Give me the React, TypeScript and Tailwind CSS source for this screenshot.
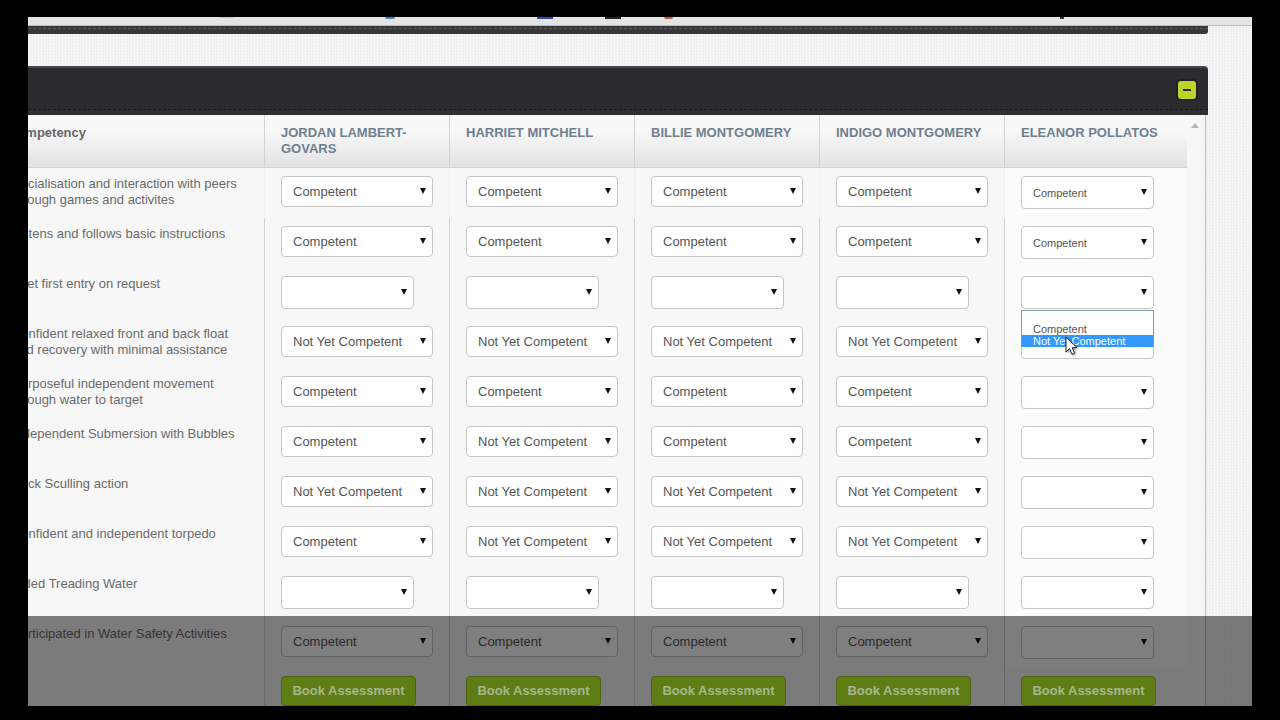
const C = "Competent";
const N = "Not Yet Competent";
const E = "";

const students = ["JORDAN LAMBERT-GOVARS", "HARRIET MITCHELL", "BILLIE MONTGOMERY", "INDIGO MONTGOMERY", "ELEANOR POLLATOS"];

const rows: { lines: string[]; values: string[] }[] = [
  { lines: ["Socialisation and interaction with peers", "through games and activites"], values: [C, C, C, C, C] },
  { lines: ["Listens and follows basic instructions"], values: [C, C, C, C, C] },
  { lines: ["Feet first entry on request"], values: [E, E, E, E, E] },
  { lines: ["Confident relaxed front and back float", "and recovery with minimal assistance"], values: [N, N, N, N, E] },
  { lines: ["Purposeful independent movement", "through water to target"], values: [C, C, C, C, E] },
  { lines: ["Independent Submersion with Bubbles"], values: [C, N, C, C, E] },
  { lines: ["Back Sculling action"], values: [N, N, N, N, E] },
  { lines: ["Confident and independent torpedo"], values: [C, N, N, N, E] },
  { lines: ["Aided Treading Water"], values: [E, E, E, E, E] },
  { lines: ["Participated in Water Safety Activities"], values: [C, C, C, C, E] },
];

function Arrow() {
  return (
    <svg width="6" height="6" viewBox="0 0 6 6" className="absolute right-[7px] top-1/2 -translate-y-1/2 -mt-[1px] pointer-events-none">
      <path d="M0 0h6L3 6z" fill="#111" />
    </svg>
  );
}

function Select({ value, small }: { value: string; small: boolean }) {
  const wide = value !== "" && !small;
  return (
    <div className={`relative ${wide ? "w-[152px] h-[31px]" : "w-[133px] h-[33px]"}`}>
      <select
        defaultValue={value}
        className={`appearance-none w-full h-full bg-white border border-[#c6c6c6] rounded-[4px] pl-[11px] outline-none text-[#555] ${small ? "text-[11px] pt-[2px]" : "text-[13px]"}`}
      >
        <option value=""></option>
        <option value={C}>{C}</option>
        <option value={N}>{N}</option>
      </select>
      <Arrow />
    </div>
  );
}

function OpenList() {
  return (
    <div className="absolute left-0 top-[34px] w-[133px] h-[37px] z-[5] bg-white border-x border-t border-[#8297ad] pt-[12px] text-[11px] leading-[12px] text-[#555]">
      <div className="pl-[11px] h-[12px]">{C}</div>
      <div className="pl-[11px] h-[12px] bg-[#3399ff] text-white">{N}</div>
    </div>
  );
}

function Cursor() {
  return (
    <svg width="14" height="20" viewBox="0 0 14 20" className="absolute left-[60px] top-[68px] z-[6] drop-shadow-[1px_1px_1px_rgba(0,0,0,0.4)]">
      <path d="M1 1v15l3.6-3.3 2.4 5.6 2.6-1.1-2.4-5.5H12z" fill="#fff" stroke="#222" strokeWidth="1" strokeLinejoin="round" />
    </svg>
  );
}

export default function App() {
  return (
    <div className="w-[1280px] h-[720px] bg-black overflow-hidden pt-[17px] px-[28px] font-['Liberation_Sans',Arial,sans-serif]">
      <div className="relative h-[689px] overflow-hidden flex flex-col bg-[#f2f2f2] bg-[conic-gradient(#f6f6f6_25%,#ededed_0_50%,#f6f6f6_0_75%,#ededed_0)] bg-[length:3px_3px]">
        {/* browser strip */}
        <div className="h-[9px] shrink-0 bg-[#e4e4e4] border-b border-[#bdbdbd] flex items-start">
          <span className="ml-[192px] w-[14px] h-[1px] bg-[#c9c9c9]" />
          <span className="ml-[151px] w-[10px] h-[2px] rounded-b-full bg-[#3f86c8]" />
          <span className="ml-[142px] w-[16px] h-[2px] bg-[#2a4aa8]" />
          <span className="ml-[52px] w-[16px] h-[2px] bg-[#222]" />
          <span className="ml-[43px] w-[9px] h-[2px] rounded-b-full bg-[#c2603a]" />
          <span className="ml-[387px] w-[4px] h-[2px] bg-[#333]" />
        </div>
        <div className="h-[8px] shrink-0 mr-[44px] bg-[#38383a] rounded-br-[3px] pt-[2px]">
          <div className="border-t border-dashed border-[#5c5c5c]" />
        </div>

        {/* panel header */}
        <div className="mt-[32px] h-[49px] shrink-0 mr-[44px] rounded-tr-[4px] rounded-br-[4px] border-t-2 border-[#47474a] bg-[#2c2c30] flex flex-col">
          <div className="flex-1 flex items-center justify-end pr-[12px] pt-[3px]">
            <div className="w-[18px] h-[18px] rounded-[3px] bg-[#bcd42c] ring-2 ring-[#222225] flex items-center justify-center">
              <div className="w-[8px] h-[2px] bg-[#2c2c1c]" />
            </div>
          </div>
          <div className="h-[6px] border-t border-dashed border-[#18181a] bg-[#2f2f33]" />
        </div>

        {/* table */}
        <div className="flex-1 mr-[46px] border-r border-[#bcbcbc] bg-[#f7f7f7] flex flex-col relative">
          <svg width="8" height="5" viewBox="0 0 8 5" className="absolute right-[6px] top-[8px]">
            <path d="M0 5L4 0l4 5z" fill="#b4b4b4" />
          </svg>
          <div className="flex h-[53px] shrink-0 mr-[18px] bg-gradient-to-b from-[#f8f8f8] from-30% to-[#e2e2e2] border-b border-[#d4d4d4]">
            <div className="w-[236px] shrink-0 overflow-hidden pt-[10px] text-[13px] leading-[16px] font-bold text-[#666]">
              <span className="block ml-[-20px]">Competency</span>
            </div>
            {students.map((s) => (
              <div key={s} className="w-[185px] shrink-0 border-l border-[#d2d2d2] pl-[16px] pr-[16px] pt-[10px] text-[13px] leading-[16px] font-bold text-[#6e7f8f] last:w-[183px] last:pr-0">
                {s}
              </div>
            ))}
          </div>
          {rows.map((r, i) => (
            <div key={r.lines[0]} className="flex h-[50px] shrink-0 mr-[18px]">
              <div className="w-[236px] shrink-0 overflow-hidden pt-[8px] text-[13px] leading-[16px] text-[#6a6a6a]">
                {r.lines.map((l) => (
                  <span key={l} className="block ml-[-16px] whitespace-nowrap">{l}</span>
                ))}
              </div>
              {r.values.map((v, j) => (
                <div key={j} className={`relative w-[185px] last:w-[183px] shrink-0 border-l pl-[16px] pt-[8px] last:bg-[#fbfbfb] ${i === 0 ? "border-[#f0f0f0]" : "border-[#d2d2d2]"}`}>
                  <Select value={v} small={j === 4} />
                  {i === 2 && j === 4 && (
                    <>
                      <div className="absolute left-[16px] top-[8px]"><OpenList /></div>
                      <Cursor />
                    </>
                  )}
                </div>
              ))}
            </div>
          ))}
          <div className="flex flex-1 mr-[18px]">
            <div className="w-[236px] shrink-0" />
            {students.map((s) => (
              <div key={s} className="w-[185px] last:w-[183px] shrink-0 border-l border-[#d2d2d2] pl-[16px] pt-[8px]">
                <button className="relative z-20 w-[135px] h-[30px] rounded-[4px] bg-[#5f7d14] border border-[#4a6410] text-[13px] font-bold text-[#a6b68c]">
                  Book Assessment
                </button>
              </div>
            ))}
          </div>
        </div>

        {/* video caption band */}
        <div className="absolute left-0 right-0 bottom-0 h-[90px] bg-black/50 z-10" />
      </div>
    </div>
  );
}
